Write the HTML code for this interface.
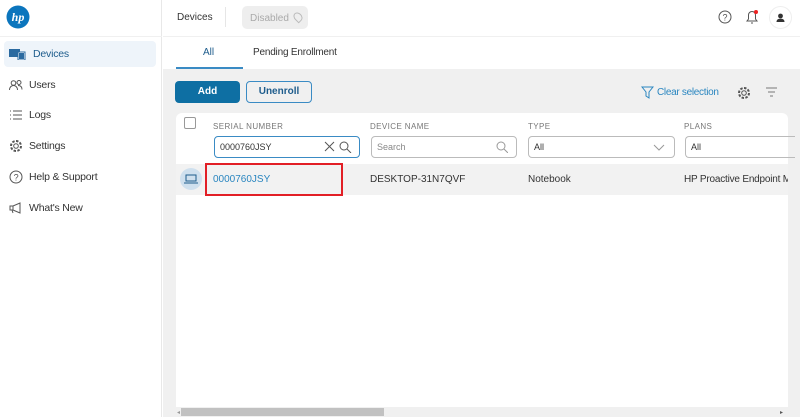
<!DOCTYPE html>
<html><head><meta charset="utf-8"><style>
*{box-sizing:border-box;margin:0;padding:0}
body{width:800px;height:417px;overflow:hidden;font-family:"Liberation Sans",sans-serif;background:#fff;position:relative;color:#333;font-size:11px}
.abs{position:absolute}
.side{left:0;top:0;width:162px;height:417px;background:#fff;border-right:1px solid #e8e8e8}
.nav{left:4px;width:152px;height:26px;display:flex;align-items:center;padding-left:5px;font-size:10.5px;color:#333;letter-spacing:-.2px}
.nav svg{margin-right:6px}
.grey{left:163px;top:69px;width:637px;height:348px;background:#f0f0f0}
.card{left:176px;top:113px;width:612px;height:294px;background:#fff;border-radius:6px 6px 0 0}
.hdr{font-size:8px;color:#777;letter-spacing:.4px}
.inp{height:22px;border:1px solid #bbb;border-radius:4px;font-size:9px;display:flex;align-items:center;padding-left:5px;color:#333}
</style></head><body>
<div class="abs side"></div>
<svg class="abs" style="left:6px;top:5px" width="24" height="24" viewBox="0 0 24 24"><circle cx="12" cy="12" r="11.5" fill="#0b75bd"/><text x="12" y="16" font-size="12" font-style="italic" font-weight="bold" fill="#fff" text-anchor="middle" font-family="Liberation Serif">hp</text></svg>
<div class="abs" style="left:0;top:36px;width:162px;height:1px;background:#f0f0f0"></div>
<div class="abs nav" style="top:41px;background:#eef4fa;border-radius:4px;color:#1d5c8c"><svg width="18" height="12"><rect x="0" y="1" width="11" height="8" fill="#2a6aa0"/><rect x="9" y="4" width="7" height="8" fill="#fff" stroke="#2a6aa0"/><rect x="10" y="5" width="5" height="6" fill="#2a6aa0"/></svg>Devices</div>
<div class="abs nav" style="top:72px"><svg width="14" height="12" fill="none" stroke="#555"><circle cx="4.5" cy="4" r="2.3"/><path d="M0.5 11c0-3 2-4.5 4-4.5s4 1.5 4 4.5"/><circle cx="10" cy="3.5" r="2"/><path d="M9 6.5c2 0 4 1 4 4"/></svg>Users</div>
<div class="abs nav" style="top:102px"><svg width="14" height="12" stroke="#555"><path d="M1 2h1M4 2h9M1 6h1M4 6h9M1 10h1M4 10h9"/></svg>Logs</div>
<div class="abs nav" style="top:133px"><svg width="14" height="14" fill="none" stroke="#555"><circle cx="7" cy="7" r="2.3"/><circle cx="7" cy="7" r="5" stroke-dasharray="2.5 1.4" stroke-width="2"/></svg>Settings</div>
<div class="abs nav" style="top:164px"><svg width="14" height="14" fill="none" stroke="#555"><circle cx="7" cy="7" r="6"/><text x="7" y="10.5" font-size="9" text-anchor="middle" fill="#555" stroke="none">?</text></svg>Help &amp; Support</div>
<div class="abs nav" style="top:195px"><svg width="14" height="12" fill="none" stroke="#555"><path d="M1 4h3l7-3v10l-7-3h-3zM4 4v4M3 8l1 3"/></svg>What's New</div>

<div class="abs" style="left:177px;top:12px;font-size:10px;color:#333">Devices</div>
<div class="abs" style="left:225px;top:7px;width:1px;height:20px;background:#e6e6e6"></div>
<div class="abs" style="left:242px;top:6px;width:66px;height:23px;background:#eee;border-radius:5px;color:#aaa;font-size:10px;padding:6px 0 0 8px">Disabled <span style="display:inline-block;width:8px;height:10px;border:1px solid #bbb;border-radius:50% 50% 50% 0;transform:rotate(-45deg);vertical-align:-1px;margin-left:2px"></span></div>
<svg class="abs" style="left:718px;top:10px" width="14" height="14" fill="none" stroke="#555"><circle cx="7" cy="7" r="6"/><text x="7" y="10.5" font-size="9" text-anchor="middle" fill="#555" stroke="none">?</text></svg>
<svg class="abs" style="left:745px;top:9px" width="14" height="16" fill="none" stroke="#555"><path d="M2 12h10l-1.5-2V6a3.5 3.5 0 0 0-7 0v4zM6 14h2"/><circle cx="11" cy="3" r="2" fill="#e22" stroke="none"/></svg>
<div class="abs" style="left:769px;top:6px;width:23px;height:23px;border-radius:50%;border:1px solid #eee"></div>
<svg class="abs" style="left:776px;top:13px" width="9" height="9" fill="#333"><circle cx="4.5" cy="3" r="2.4"/><path d="M0.5 9c0-2.5 1.5-3.3 4-3.3s4 .8 4 3.3z"/></svg>
<div class="abs" style="left:163px;top:36px;width:637px;height:1px;background:#f0f0f0"></div>
<div class="abs" style="left:203px;top:47px;font-size:10px;color:#1d5c8c">All</div>
<div class="abs" style="left:176px;top:67px;width:67px;height:2px;background:#3a8bc4"></div>
<div class="abs" style="left:253px;top:47px;font-size:10px;color:#333;letter-spacing:-.2px">Pending Enrollment</div>

<div class="abs grey"></div>
<div class="abs" style="left:175px;top:81px;width:65px;height:22px;background:#0e6fa3;border-radius:4px;color:#fff;font-size:10px;text-align:center;line-height:22px;font-weight:bold">Add</div>
<div class="abs" style="left:246px;top:81px;width:66px;height:22px;border:1px solid #3a8bc4;border-radius:4px;color:#1d5c8c;font-size:10px;text-align:center;line-height:20px;font-weight:bold">Unenroll</div>
<svg class="abs" style="left:641px;top:86px" width="13" height="13" fill="none" stroke="#2a86c0"><path d="M1 1h11L8 6v6L5 10V6z"/></svg>
<div class="abs" style="left:657px;top:87px;font-size:10px;color:#2a86c0;letter-spacing:-.3px">Clear selection</div>
<svg class="abs" style="left:737px;top:86px" width="14" height="14" fill="none" stroke="#555"><circle cx="7" cy="7" r="2.3"/><circle cx="7" cy="7" r="5" stroke-dasharray="2.5 1.4" stroke-width="2"/></svg>
<svg class="abs" style="left:765px;top:86px" width="13" height="12" stroke="#777"><path d="M1 2h11M3 6h7M5 10h3"/></svg>

<div class="abs card"></div>
<div class="abs" style="left:184px;top:117px;width:12px;height:12px;border:1px solid #999;border-radius:2px;background:#fff"></div>
<div class="abs hdr" style="left:213px;top:122px">SERIAL NUMBER</div>
<div class="abs hdr" style="left:370px;top:122px">DEVICE NAME</div>
<div class="abs hdr" style="left:528px;top:122px">TYPE</div>
<div class="abs hdr" style="left:684px;top:122px">PLANS</div>
<div class="abs inp" style="left:214px;top:136px;width:146px;border-color:#3a8bc4;border-width:1.5px">0000760JSY</div>
<svg class="abs" style="left:324px;top:141px" width="30" height="12" fill="none" stroke="#555"><path d="M1 1l9 9M10 1l-9 9"/><circle cx="20" cy="5" r="4"/><path d="M23 8l4 4"/></svg>
<div class="abs inp" style="left:371px;top:136px;width:146px;color:#888">Search</div>
<svg class="abs" style="left:496px;top:141px" width="12" height="12" fill="none" stroke="#999"><circle cx="5" cy="5" r="4"/><path d="M8 8l4 4"/></svg>
<div class="abs inp" style="left:528px;top:136px;width:147px">All</div>
<svg class="abs" style="left:653px;top:144px" width="12" height="7" fill="none" stroke="#999"><path d="M1 1l5 5 5-5"/></svg>
<div class="abs inp" style="left:685px;top:136px;width:110px;border-right:none;border-radius:4px 0 0 4px">All</div>
<div class="abs" style="left:176px;top:164px;width:612px;height:31px;background:#f2f2f2"></div>
<div class="abs" style="left:180px;top:168px;width:22px;height:22px;border-radius:50%;background:#cfe0ee"></div>
<svg class="abs" style="left:184px;top:174px" width="14" height="10" fill="none" stroke="#1d5c8c"><rect x="2" y="1" width="10" height="6"/><path d="M0 9h14"/></svg>
<div class="abs" style="left:213px;top:174px;font-size:10px;color:#2a86c0">0000760JSY</div>
<div class="abs" style="left:205px;top:163px;width:138px;height:33px;border:2px solid #e21f26"></div>
<div class="abs" style="left:370px;top:174px;font-size:10px;color:#333">DESKTOP-31N7QVF</div>
<div class="abs" style="left:528px;top:174px;font-size:10px;color:#333">Notebook</div>
<div class="abs" style="left:684px;top:174px;font-size:10px;color:#333;white-space:nowrap;width:104px;overflow:hidden;letter-spacing:-.2px">HP Proactive Endpoint Ma</div>
<div class="abs" style="left:176px;top:407px;width:612px;height:10px;background:#f0f0f0"></div>
<div class="abs" style="left:181px;top:408px;width:203px;height:8px;background:#c1c1c1"></div>
<div class="abs" style="left:177px;top:409px;font-size:6px;color:#999">◂</div>
<div class="abs" style="left:780px;top:409px;font-size:6px;color:#555">▸</div>
</body></html>
